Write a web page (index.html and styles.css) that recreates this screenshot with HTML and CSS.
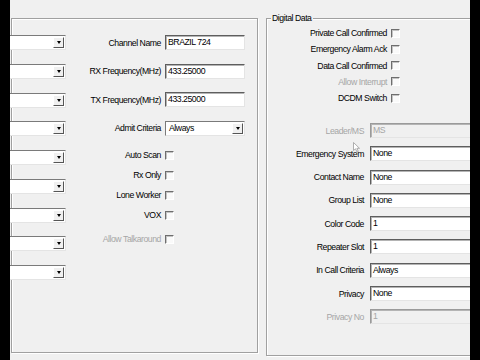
FILE: index.html
```html
<!DOCTYPE html>
<html>
<head>
<meta charset="utf-8">
<link rel="stylesheet" href="styles.css">
</head>
<body>
<div class="screen">
  <div class="bar"></div>
  <div class="window">
    <div class="group group-left">
      <div class="combo-col">
        <div class="combo"><span class="combo-text"></span><span class="drop"><i></i></span></div>
        <div class="combo"><span class="combo-text"></span><span class="drop"><i></i></span></div>
        <div class="combo"><span class="combo-text"></span><span class="drop"><i></i></span></div>
        <div class="combo"><span class="combo-text"></span><span class="drop"><i></i></span></div>
        <div class="combo"><span class="combo-text"></span><span class="drop"><i></i></span></div>
        <div class="combo"><span class="combo-text"></span><span class="drop"><i></i></span></div>
        <div class="combo"><span class="combo-text"></span><span class="drop"><i></i></span></div>
        <div class="combo"><span class="combo-text"></span><span class="drop"><i></i></span></div>
        <div class="combo"><span class="combo-text"></span><span class="drop"><i></i></span></div>
      </div>
      <div class="form-col">
        <div class="frow"><span class="lbl">Channel Name</span><span class="edit">BRAZIL 724</span></div>
        <div class="frow"><span class="lbl">RX Frequency(MHz)</span><span class="edit">433.25000</span></div>
        <div class="frow"><span class="lbl">TX Frequency(MHz)</span><span class="edit">433.25000</span></div>
        <div class="frow"><span class="lbl">Admit Criteria</span><span class="combo combo-wide"><span class="combo-text">Always</span><span class="drop"><i></i></span></span></div>
        <div class="crow first"><span class="lbl">Auto Scan</span><span class="check"></span></div>
        <div class="crow"><span class="lbl">Rx Only</span><span class="check"></span></div>
        <div class="crow"><span class="lbl">Lone Worker</span><span class="check"></span></div>
        <div class="crow"><span class="lbl">VOX</span><span class="check"></span></div>
        <div class="crow last"><span class="lbl disabled">Allow Talkaround</span><span class="check"></span></div>
      </div>
    </div>
    <fieldset class="group group-right">
      <legend>Digital Data</legend>
      <div class="checks">
        <div class="crow"><span class="lbl">Private Call Confirmed</span><span class="check"></span></div>
        <div class="crow"><span class="lbl">Emergency Alarm Ack</span><span class="check"></span></div>
        <div class="crow"><span class="lbl">Data Call Confirmed</span><span class="check"></span></div>
        <div class="crow"><span class="lbl disabled">Allow Interrupt</span><span class="check"></span></div>
        <div class="crow"><span class="lbl">DCDM Switch</span><span class="check"></span></div>
      </div>
      <div class="fields">
        <div class="frow"><span class="lbl disabled">Leader/MS</span><span class="edit off">MS</span></div>
        <div class="frow"><span class="lbl">Emergency System</span><span class="edit">None</span></div>
        <div class="frow"><span class="lbl">Contact Name</span><span class="edit">None</span></div>
        <div class="frow"><span class="lbl">Group List</span><span class="edit">None</span></div>
        <div class="frow"><span class="lbl">Color Code</span><span class="edit">1</span></div>
        <div class="frow"><span class="lbl">Repeater Slot</span><span class="edit">1</span></div>
        <div class="frow"><span class="lbl">In Call Criteria</span><span class="edit">Always</span></div>
        <div class="frow"><span class="lbl">Privacy</span><span class="edit">None</span></div>
        <div class="frow"><span class="lbl disabled">Privacy No</span><span class="edit off">1</span></div>
      </div>
    </fieldset>
    <svg class="cursor" width="8" height="11" viewBox="0 0 8 11"><path d="M0.5 0.5 L0.5 8.5 L2.5 6.8 L4 10 L5.3 9.4 L3.9 6.3 L6.5 6.3 Z" fill="#fff" stroke="#9a9a9a" stroke-width="0.8"/></svg>
  </div>
  <div class="bar"></div>
</div>
</body>
</html>
```
FILE: styles.css
```css
* { box-sizing: border-box; }
html, body { margin: 0; padding: 0; }
body {
  width: 480px;
  height: 360px;
  overflow: hidden;
  background: #000;
  font-family: "Liberation Sans", Arial, sans-serif;
  font-size: 8.7px;
  letter-spacing: -0.45px;
  color: #000;
}
.screen { display: flex; height: 360px; }
.bar { flex: none; width: 10px; background: #000; }
.window {
  flex: none;
  width: 460px;
  height: 360px;
  background: #f0f0f0;
  display: flex;
  align-items: flex-start;
  overflow: hidden;
  position: relative;
}
.group {
  border: 1px solid #a0a0a0;
  box-shadow: inset 1px 1px 0 #fff, 1px 1px 0 #fff;
}
.group-left {
  flex: none;
  margin: 18px 0 0 1px;
  width: 247px;
  height: 335px;
  display: flex;
}
.combo-col {
  flex: none;
  width: 56px;
  margin-left: -2px;
  padding-top: 16px;
  display: flex;
  flex-direction: column;
  gap: 13.75px;
}
.combo {
  display: flex;
  height: 15px;
  background: #fff;
  border: 1px solid;
  border-color: #7a7a7a #e4e4e4 #e4e4e4 #7a7a7a;
  padding: 1px;
}
.combo-col .combo { border-left: none; }
.combo-text { flex: 1; padding-left: 2px; line-height: 11px; }
.drop {
  flex: none;
  width: 11px;
  background: #f0f0f0;
  border: 1px solid;
  border-color: #fff #555 #555 #fff;
  display: flex;
  align-items: center;
  justify-content: center;
}
.drop i {
  width: 0;
  height: 0;
  border-left: 2.5px solid transparent;
  border-right: 2.5px solid transparent;
  border-top: 3px solid #000;
}
.form-col {
  flex: none;
  padding-top: 16px;
  display: flex;
  flex-direction: column;
}
.frow {
  display: flex;
  align-items: center;
  height: 15px;
}
.form-col .frow { margin-bottom: 13.5px; }
.form-col .frow .lbl { width: 95px; }
.lbl {
  flex: none;
  text-align: right;
  white-space: nowrap;
  margin-right: 4px;
}
.disabled { color: #a6a6a6; }
.edit {
  flex: none;
  width: 80px;
  height: 15px;
  background: #fff;
  border: 1px solid;
  border-color: #5e5e5e #e4e4e4 #e4e4e4 #5e5e5e;
  box-shadow: inset 1px 1px 0 #b4b4b4;
  padding-left: 2px;
  line-height: 13px;
  white-space: nowrap;
}
.edit.off { background: #f0f0f0; color: #a6a6a6; border-color: #9a9a9a #e4e4e4 #e4e4e4 #9a9a9a; }
.combo-wide { width: 80px; }
.crow {
  display: flex;
  align-items: center;
  height: 10px;
}
.form-col .crow { margin-bottom: 10px; }
.form-col .crow .lbl { width: 95px; }
.form-col .crow.first { margin-top: 1px; }
.form-col .crow.last { margin-top: 4px; }
.check {
  flex: none;
  width: 9px;
  height: 9px;
  background: #fafafa;
  border: 1px solid;
  border-color: #6e6e6e #fff #fff #6e6e6e;
  box-shadow: inset 1px 1px 0 #c4c4c4;
}
.group-right {
  flex: none;
  margin: 13px 0 0 8px;
  padding: 0;
  min-width: 0;
  width: 230px;
  height: 343px;
}
.group-right legend {
  margin-left: 4px;
  padding: 0 1px;
  line-height: 10px;
  background: #f0f0f0;
}
.checks {
  padding-top: 5px;
  display: flex;
  flex-direction: column;
  gap: 6.25px;
}
.checks .lbl { width: 120px; }
.fields {
  margin-top: 20px;
  display: flex;
  flex-direction: column;
  gap: 8.3px;
}
.fields .lbl { width: 97px; margin-right: 6px; }
.fields .edit { width: 120px; }
.cursor { position: absolute; left: 343px; top: 142px; }
```
